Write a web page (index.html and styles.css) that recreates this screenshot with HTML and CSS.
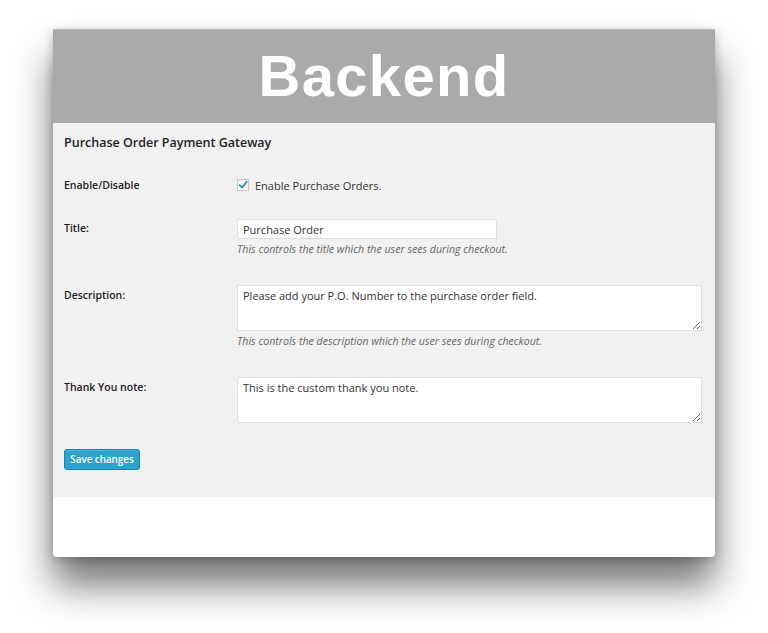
FILE: index.html
```html
<!DOCTYPE html>
<html lang="en">
<head>
    <meta charset="UTF-8">
    <meta name="viewport" content="width=device-width, initial-scale=1.0">
    <title>Backend</title>
    <link rel="stylesheet" href="styles.css">
</head>
<body>

<!-- Screenshot window -->
<div class="window">
    <div class="banner">Backend</div>

    <div class="panel">
        <h3>Purchase Order Payment Gateway</h3>

        <div class="row row-check">
            <div class="label">Enable/Disable</div>
            <div class="field">
                <label class="check">
                    <span class="box">
                        <svg width="10" height="10" viewBox="0 0 10 10"><path d="M1.6 5.2 L4 7.6 L8.6 1.8" fill="none" stroke="#1e8cbe" stroke-width="1.8" stroke-linecap="round" stroke-linejoin="round"/></svg>
                    </span>
                    Enable Purchase Orders.
                </label>
            </div>
        </div>

        <div class="row row-title">
            <div class="label">Title:</div>
            <div class="field">
                <input type="text" class="text-input" value="Purchase Order">
                <p class="desc">This controls the title which the user sees during checkout.</p>
            </div>
        </div>

        <div class="row">
            <div class="label label-area">Description:</div>
            <div class="field">
                <textarea class="area">Please add your P.O. Number to the purchase order field.</textarea>
                <p class="desc">This controls the description which the user sees during checkout.</p>
            </div>
        </div>

        <div class="row">
            <div class="label label-area">Thank You note:</div>
            <div class="field">
                <textarea class="area">This is the custom thank you note.</textarea>
            </div>
        </div>

        <button type="button" class="save-btn">Save changes</button>
    </div>

    <div class="bottom"></div>
</div>

</body>
</html>
```

FILE: styles.css
```css
html, body {
    margin: 0;
    background-color: white;
}
body {
    min-height: 633px;
    padding: 29px 0 1px;
    box-sizing: border-box;
    font-family: "Open Sans", "Liberation Sans", sans-serif;
}
/* window with the big drop shadow */
.window {
    width: 662px;
    margin-left: 53px;
    border-radius: 0 0 4px 4px;
    background-color: white;
    box-shadow: 0 28px 38px rgba(0, 0, 0, 0.55), 0 2px 10px rgba(0, 0, 0, 0.22);
    overflow: hidden;
}
.banner {
    height: 94px;
    background-color: #aaaaaa;
    border-top: 1px solid #b8b8b8;
    box-sizing: border-box;
    color: white;
    font-family: "Liberation Sans", Arial, sans-serif;
    font-weight: bold;
    font-size: 58px;
    letter-spacing: 1.3px;
    line-height: 92px;
    text-align: center;
}
.panel {
    background-color: #f1f1f1;
    padding: 10px 13px 27px 11px;
}
.panel h3 {
    margin: 0;
    font-size: 12.5px;
    font-weight: 600;
    line-height: 20px;
    color: #222;
}
.row {
    display: flex;
    margin-top: 28px;
}
.row-check {
    margin-top: 23px;
}
.row-title {
    margin-top: 25px;
}
.label {
    width: 173px;
    flex-shrink: 0;
    font-size: 10.5px;
    font-weight: 600;
    color: #222;
    line-height: 18px;
}
.label-area {
    line-height: 20px;
}
.field {
    flex: 1;
}
.check {
    display: flex;
    align-items: center;
    height: 18px;
    font-size: 11px;
    color: #333;
}
.box {
    width: 12px;
    height: 12px;
    box-sizing: border-box;
    border: 1px solid #c8c8c8;
    background-color: white;
    box-shadow: inset 0 1px 2px rgba(0, 0, 0, 0.08);
    margin-right: 6px;
    display: flex;
    align-items: center;
    justify-content: center;
}
.text-input {
    display: block;
    width: 260px;
    height: 20px;
    box-sizing: border-box;
    margin: 0;
    padding: 0 5px;
    border: 1px solid #e0e0e0;
    background-color: white;
    font-family: "Open Sans", "Liberation Sans", sans-serif;
    font-size: 11px;
    color: #333;
    outline: none;
}
.area {
    display: block;
    width: 465px;
    height: 46px;
    box-sizing: border-box;
    margin: 0;
    padding: 2px 5px;
    border: 1px solid #e0e0e0;
    background-color: white;
    font-family: "Open Sans", "Liberation Sans", sans-serif;
    font-size: 11px;
    line-height: 15px;
    color: #333;
    outline: none;
}
.desc {
    margin: 3px 0 0;
    font-size: 10.6px;
    font-style: italic;
    line-height: 15px;
    color: #666;
}
.save-btn {
    display: block;
    margin-top: 26px;
    width: 76px;
    height: 21px;
    padding: 0;
    border: 1px solid #0e86b5;
    border-radius: 3px;
    background-color: #2ea2cc;
    box-shadow: inset 0 1px 0 rgba(120, 200, 230, 0.5);
    color: white;
    font-family: "Open Sans", "Liberation Sans", sans-serif;
    font-size: 9.8px;
    font-weight: 600;
    cursor: pointer;
}
.bottom {
    height: 60px;
}
```
